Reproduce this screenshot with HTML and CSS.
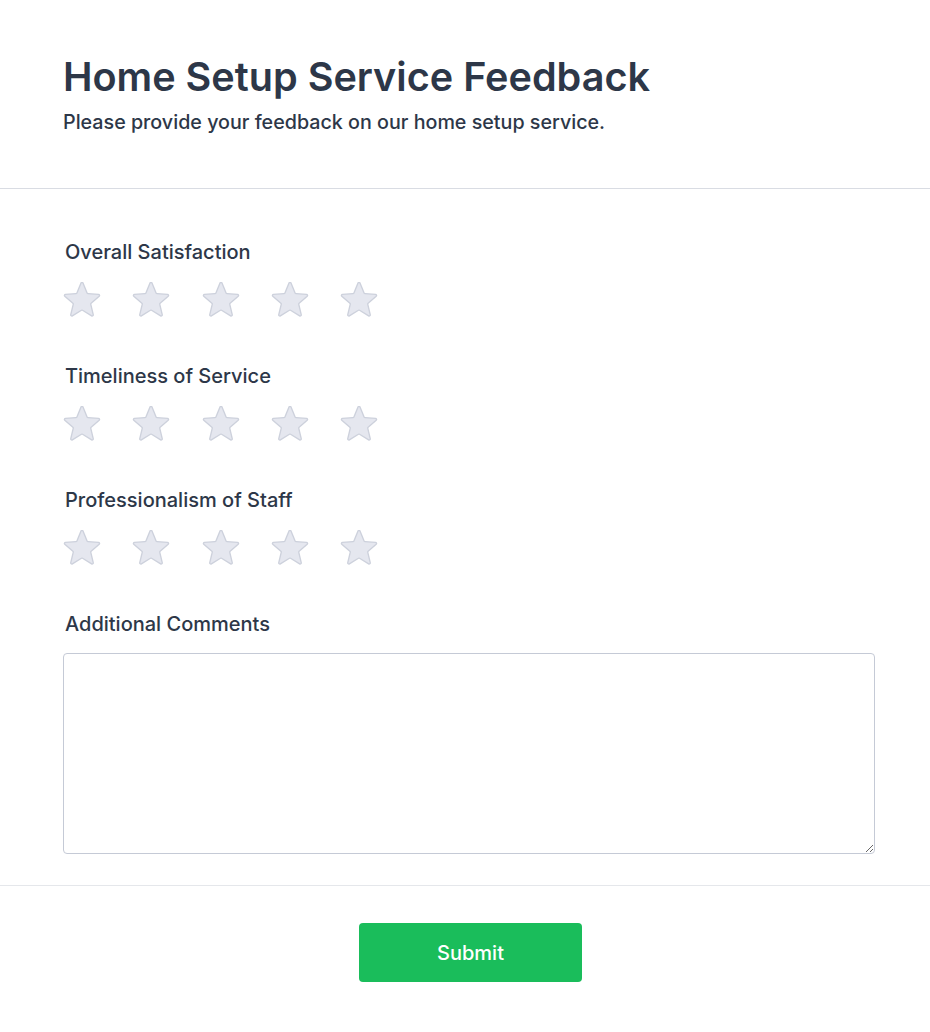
FILE: index.html
```html
<!DOCTYPE html>
<html lang="en">
<head>
  <meta charset="UTF-8" />
  <meta name="viewport" content="width=device-width, initial-scale=1.0"/>
  <title>Home Setup Service Feedback</title>
  <link rel="stylesheet" href="styles.css">
</head>
<body>

  <header class="form-header">
    <h1>Home Setup Service Feedback</h1>
    <p>Please provide your feedback on our home setup service.</p>
  </header>

  <form class="feedback-form">
    <div class="form-body">

      <!-- Rating: overall -->
      <div class="field">
        <label>Overall Satisfaction</label>
        <div class="stars">
          <svg class="star" viewBox="2.1 3 19.8 18.6"><path d="M11.48 3.499a.562.562 0 0 1 1.04 0l2.125 5.111a.563.563 0 0 0 .475.345l5.518.442c.499.04.701.663.321.988l-4.204 3.602a.563.563 0 0 0-.182.557l1.285 5.385a.562.562 0 0 1-.84.61l-4.725-2.885a.562.562 0 0 0-.586 0L6.982 20.54a.562.562 0 0 1-.84-.61l1.285-5.386a.562.562 0 0 0-.182-.557l-4.204-3.602a.562.562 0 0 1 .321-.988l5.518-.442a.563.563 0 0 0 .475-.345L11.48 3.5Z"/></svg>
          <svg class="star" viewBox="2.1 3 19.8 18.6"><path d="M11.48 3.499a.562.562 0 0 1 1.04 0l2.125 5.111a.563.563 0 0 0 .475.345l5.518.442c.499.04.701.663.321.988l-4.204 3.602a.563.563 0 0 0-.182.557l1.285 5.385a.562.562 0 0 1-.84.61l-4.725-2.885a.562.562 0 0 0-.586 0L6.982 20.54a.562.562 0 0 1-.84-.61l1.285-5.386a.562.562 0 0 0-.182-.557l-4.204-3.602a.562.562 0 0 1 .321-.988l5.518-.442a.563.563 0 0 0 .475-.345L11.48 3.5Z"/></svg>
          <svg class="star" viewBox="2.1 3 19.8 18.6"><path d="M11.48 3.499a.562.562 0 0 1 1.04 0l2.125 5.111a.563.563 0 0 0 .475.345l5.518.442c.499.04.701.663.321.988l-4.204 3.602a.563.563 0 0 0-.182.557l1.285 5.385a.562.562 0 0 1-.84.61l-4.725-2.885a.562.562 0 0 0-.586 0L6.982 20.54a.562.562 0 0 1-.84-.61l1.285-5.386a.562.562 0 0 0-.182-.557l-4.204-3.602a.562.562 0 0 1 .321-.988l5.518-.442a.563.563 0 0 0 .475-.345L11.48 3.5Z"/></svg>
          <svg class="star" viewBox="2.1 3 19.8 18.6"><path d="M11.48 3.499a.562.562 0 0 1 1.04 0l2.125 5.111a.563.563 0 0 0 .475.345l5.518.442c.499.04.701.663.321.988l-4.204 3.602a.563.563 0 0 0-.182.557l1.285 5.385a.562.562 0 0 1-.84.61l-4.725-2.885a.562.562 0 0 0-.586 0L6.982 20.54a.562.562 0 0 1-.84-.61l1.285-5.386a.562.562 0 0 0-.182-.557l-4.204-3.602a.562.562 0 0 1 .321-.988l5.518-.442a.563.563 0 0 0 .475-.345L11.48 3.5Z"/></svg>
          <svg class="star" viewBox="2.1 3 19.8 18.6"><path d="M11.48 3.499a.562.562 0 0 1 1.04 0l2.125 5.111a.563.563 0 0 0 .475.345l5.518.442c.499.04.701.663.321.988l-4.204 3.602a.563.563 0 0 0-.182.557l1.285 5.385a.562.562 0 0 1-.84.61l-4.725-2.885a.562.562 0 0 0-.586 0L6.982 20.54a.562.562 0 0 1-.84-.61l1.285-5.386a.562.562 0 0 0-.182-.557l-4.204-3.602a.562.562 0 0 1 .321-.988l5.518-.442a.563.563 0 0 0 .475-.345L11.48 3.5Z"/></svg>
        </div>
      </div>

      <!-- Rating: timeliness -->
      <div class="field">
        <label>Timeliness of Service</label>
        <div class="stars">
          <svg class="star" viewBox="2.1 3 19.8 18.6"><path d="M11.48 3.499a.562.562 0 0 1 1.04 0l2.125 5.111a.563.563 0 0 0 .475.345l5.518.442c.499.04.701.663.321.988l-4.204 3.602a.563.563 0 0 0-.182.557l1.285 5.385a.562.562 0 0 1-.84.61l-4.725-2.885a.562.562 0 0 0-.586 0L6.982 20.54a.562.562 0 0 1-.84-.61l1.285-5.386a.562.562 0 0 0-.182-.557l-4.204-3.602a.562.562 0 0 1 .321-.988l5.518-.442a.563.563 0 0 0 .475-.345L11.48 3.5Z"/></svg>
          <svg class="star" viewBox="2.1 3 19.8 18.6"><path d="M11.48 3.499a.562.562 0 0 1 1.04 0l2.125 5.111a.563.563 0 0 0 .475.345l5.518.442c.499.04.701.663.321.988l-4.204 3.602a.563.563 0 0 0-.182.557l1.285 5.385a.562.562 0 0 1-.84.61l-4.725-2.885a.562.562 0 0 0-.586 0L6.982 20.54a.562.562 0 0 1-.84-.61l1.285-5.386a.562.562 0 0 0-.182-.557l-4.204-3.602a.562.562 0 0 1 .321-.988l5.518-.442a.563.563 0 0 0 .475-.345L11.48 3.5Z"/></svg>
          <svg class="star" viewBox="2.1 3 19.8 18.6"><path d="M11.48 3.499a.562.562 0 0 1 1.04 0l2.125 5.111a.563.563 0 0 0 .475.345l5.518.442c.499.04.701.663.321.988l-4.204 3.602a.563.563 0 0 0-.182.557l1.285 5.385a.562.562 0 0 1-.84.61l-4.725-2.885a.562.562 0 0 0-.586 0L6.982 20.54a.562.562 0 0 1-.84-.61l1.285-5.386a.562.562 0 0 0-.182-.557l-4.204-3.602a.562.562 0 0 1 .321-.988l5.518-.442a.563.563 0 0 0 .475-.345L11.48 3.5Z"/></svg>
          <svg class="star" viewBox="2.1 3 19.8 18.6"><path d="M11.48 3.499a.562.562 0 0 1 1.04 0l2.125 5.111a.563.563 0 0 0 .475.345l5.518.442c.499.04.701.663.321.988l-4.204 3.602a.563.563 0 0 0-.182.557l1.285 5.385a.562.562 0 0 1-.84.61l-4.725-2.885a.562.562 0 0 0-.586 0L6.982 20.54a.562.562 0 0 1-.84-.61l1.285-5.386a.562.562 0 0 0-.182-.557l-4.204-3.602a.562.562 0 0 1 .321-.988l5.518-.442a.563.563 0 0 0 .475-.345L11.48 3.5Z"/></svg>
          <svg class="star" viewBox="2.1 3 19.8 18.6"><path d="M11.48 3.499a.562.562 0 0 1 1.04 0l2.125 5.111a.563.563 0 0 0 .475.345l5.518.442c.499.04.701.663.321.988l-4.204 3.602a.563.563 0 0 0-.182.557l1.285 5.385a.562.562 0 0 1-.84.61l-4.725-2.885a.562.562 0 0 0-.586 0L6.982 20.54a.562.562 0 0 1-.84-.61l1.285-5.386a.562.562 0 0 0-.182-.557l-4.204-3.602a.562.562 0 0 1 .321-.988l5.518-.442a.563.563 0 0 0 .475-.345L11.48 3.5Z"/></svg>
        </div>
      </div>

      <!-- Rating: professionalism -->
      <div class="field">
        <label>Professionalism of Staff</label>
        <div class="stars">
          <svg class="star" viewBox="2.1 3 19.8 18.6"><path d="M11.48 3.499a.562.562 0 0 1 1.04 0l2.125 5.111a.563.563 0 0 0 .475.345l5.518.442c.499.04.701.663.321.988l-4.204 3.602a.563.563 0 0 0-.182.557l1.285 5.385a.562.562 0 0 1-.84.61l-4.725-2.885a.562.562 0 0 0-.586 0L6.982 20.54a.562.562 0 0 1-.84-.61l1.285-5.386a.562.562 0 0 0-.182-.557l-4.204-3.602a.562.562 0 0 1 .321-.988l5.518-.442a.563.563 0 0 0 .475-.345L11.48 3.5Z"/></svg>
          <svg class="star" viewBox="2.1 3 19.8 18.6"><path d="M11.48 3.499a.562.562 0 0 1 1.04 0l2.125 5.111a.563.563 0 0 0 .475.345l5.518.442c.499.04.701.663.321.988l-4.204 3.602a.563.563 0 0 0-.182.557l1.285 5.385a.562.562 0 0 1-.84.61l-4.725-2.885a.562.562 0 0 0-.586 0L6.982 20.54a.562.562 0 0 1-.84-.61l1.285-5.386a.562.562 0 0 0-.182-.557l-4.204-3.602a.562.562 0 0 1 .321-.988l5.518-.442a.563.563 0 0 0 .475-.345L11.48 3.5Z"/></svg>
          <svg class="star" viewBox="2.1 3 19.8 18.6"><path d="M11.48 3.499a.562.562 0 0 1 1.04 0l2.125 5.111a.563.563 0 0 0 .475.345l5.518.442c.499.04.701.663.321.988l-4.204 3.602a.563.563 0 0 0-.182.557l1.285 5.385a.562.562 0 0 1-.84.61l-4.725-2.885a.562.562 0 0 0-.586 0L6.982 20.54a.562.562 0 0 1-.84-.61l1.285-5.386a.562.562 0 0 0-.182-.557l-4.204-3.602a.562.562 0 0 1 .321-.988l5.518-.442a.563.563 0 0 0 .475-.345L11.48 3.5Z"/></svg>
          <svg class="star" viewBox="2.1 3 19.8 18.6"><path d="M11.48 3.499a.562.562 0 0 1 1.04 0l2.125 5.111a.563.563 0 0 0 .475.345l5.518.442c.499.04.701.663.321.988l-4.204 3.602a.563.563 0 0 0-.182.557l1.285 5.385a.562.562 0 0 1-.84.61l-4.725-2.885a.562.562 0 0 0-.586 0L6.982 20.54a.562.562 0 0 1-.84-.61l1.285-5.386a.562.562 0 0 0-.182-.557l-4.204-3.602a.562.562 0 0 1 .321-.988l5.518-.442a.563.563 0 0 0 .475-.345L11.48 3.5Z"/></svg>
          <svg class="star" viewBox="2.1 3 19.8 18.6"><path d="M11.48 3.499a.562.562 0 0 1 1.04 0l2.125 5.111a.563.563 0 0 0 .475.345l5.518.442c.499.04.701.663.321.988l-4.204 3.602a.563.563 0 0 0-.182.557l1.285 5.385a.562.562 0 0 1-.84.61l-4.725-2.885a.562.562 0 0 0-.586 0L6.982 20.54a.562.562 0 0 1-.84-.61l1.285-5.386a.562.562 0 0 0-.182-.557l-4.204-3.602a.562.562 0 0 1 .321-.988l5.518-.442a.563.563 0 0 0 .475-.345L11.48 3.5Z"/></svg>
        </div>
      </div>

      <!-- Comments -->
      <div class="field">
        <label for="comments">Additional Comments</label>
        <textarea id="comments" name="comments"></textarea>
      </div>

    </div>

    <div class="form-footer">
      <button type="submit">Submit</button>
    </div>
  </form>

</body>
</html>
```

FILE: styles.css
```css
body {
  font-family: Inter, "Noto Sans", sans-serif;
  background: #fff;
  color: #2d3748;
  margin: 0;
  padding: 0;
}

/* Header */
.form-header {
  padding: 53px 55px 51px 63px;
  border-bottom: 1px solid #d9dce3;
}

.form-header h1 {
  margin: 0;
  font-size: 39.6px;
  line-height: 48px;
  font-weight: 600;
}

.form-header p {
  margin: 6px 0 0;
  font-size: 19.7px;
  line-height: 30px;
  font-weight: 500;
}

/* Form body */
.form-body {
  padding: 51px 55px 31px 63px;
}

.field {
  margin-bottom: 46px;
}

.field:last-child {
  margin-bottom: 0;
}

.field label {
  display: block;
  font-size: 20px;
  line-height: 24px;
  font-weight: 500;
  margin: 0 0 18px 2px;
}

.stars {
  display: flex;
  gap: 31.3px;
}

.star {
  width: 38px;
  height: 36px;
  fill: #e5e7ef;
  stroke: #cdd1dc;
  stroke-width: 0.7;
  stroke-linejoin: round;
}

textarea {
  display: block;
  box-sizing: border-box;
  width: 100%;
  height: 201px;
  margin-top: -1px;
  border: 1px solid #c5cad6;
  border-radius: 4px;
  padding: 10px;
  font-family: inherit;
  font-size: 16px;
  resize: vertical;
}

/* Footer */
.form-footer {
  border-top: 1px solid #e5e7eb;
  padding: 37px 52px 50px 63px;
  display: flex;
  justify-content: center;
}

.form-footer button {
  width: 223px;
  height: 59px;
  background: #1abd5b;
  color: #fff;
  border: none;
  border-radius: 4px;
  font-family: inherit;
  font-size: 20px;
  font-weight: 500;
  cursor: pointer;
}
```
